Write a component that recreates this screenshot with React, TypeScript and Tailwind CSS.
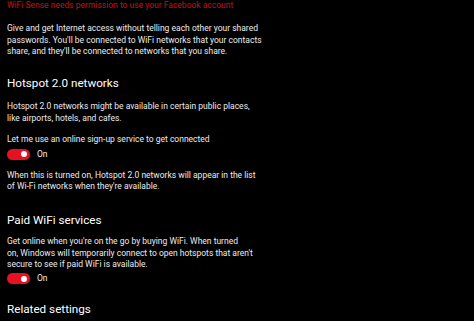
import React from "react";

function Toggle() {
  return (
    <div className="flex items-center h-[12px] mt-[3px]">
      <div className="relative w-[23px] h-[11px] rounded-full bg-[#e81123]">
        <div className="absolute right-[3px] top-[2.5px] w-[6px] h-[6px] rounded-full bg-white" />
      </div>
      <span className="ml-[7px] text-[8.5px] leading-[11.5px] text-[#ececec]">On</span>
    </div>
  );
}

export default function App() {
  const p = "text-[8.5px] leading-[11.5px] text-[#ececec]";
  const h = "text-[11.7px] leading-[20px] text-white";
  return (
    <div
      className="w-[474px] h-[321px] bg-black overflow-hidden pl-[7px]"
      style={{ fontFamily: 'Roboto, "Noto Sans", sans-serif' }}
    >
      <div className="text-[8.5px] leading-[11.5px] text-[#c50f1f]">
        WiFi Sense needs permission to use your Facebook account
      </div>
      <p className={`${p} mt-[11.75px]`}>
        Give and get Internet access without telling each other your shared
        <br />
        passwords. You'll be connected to WiFi networks that your contacts
        <br />
        share, and they'll be connected to networks that you share.
      </p>
      <h2 className={`${h} mt-[15.25px]`}>Hotspot 2.0 networks</h2>
      <p className={`${p} mt-[8.25px]`}>
        Hotspot 2.0 networks might be available in certain public places,
        <br />
        like airports, hotels, and cafes.
      </p>
      <p className={`${p} mt-[9.5px]`}>Let me use an online sign-up service to get connected</p>
      <Toggle />
      <p className={`${p} mt-[9.25px]`}>
        When this is turned on, Hotspot 2.0 networks will appear in the list
        <br />
        of Wi-Fi networks when they're available.
      </p>
      <h2 className={`${h} mt-[17.25px]`}>Paid WiFi services</h2>
      <p className={`${p} mt-[6.25px]`}>
        Get online when you're on the go by buying WiFi. When turned
        <br />
        on, Windows will temporarily connect to open hotspots that aren't
        <br />
        secure to see if paid WiFi is available.
      </p>
      <div className="-mt-[1px]">
        <Toggle />
      </div>
      <h2 className={`${h} mt-[14px]`}>Related settings</h2>
    </div>
  );
}
